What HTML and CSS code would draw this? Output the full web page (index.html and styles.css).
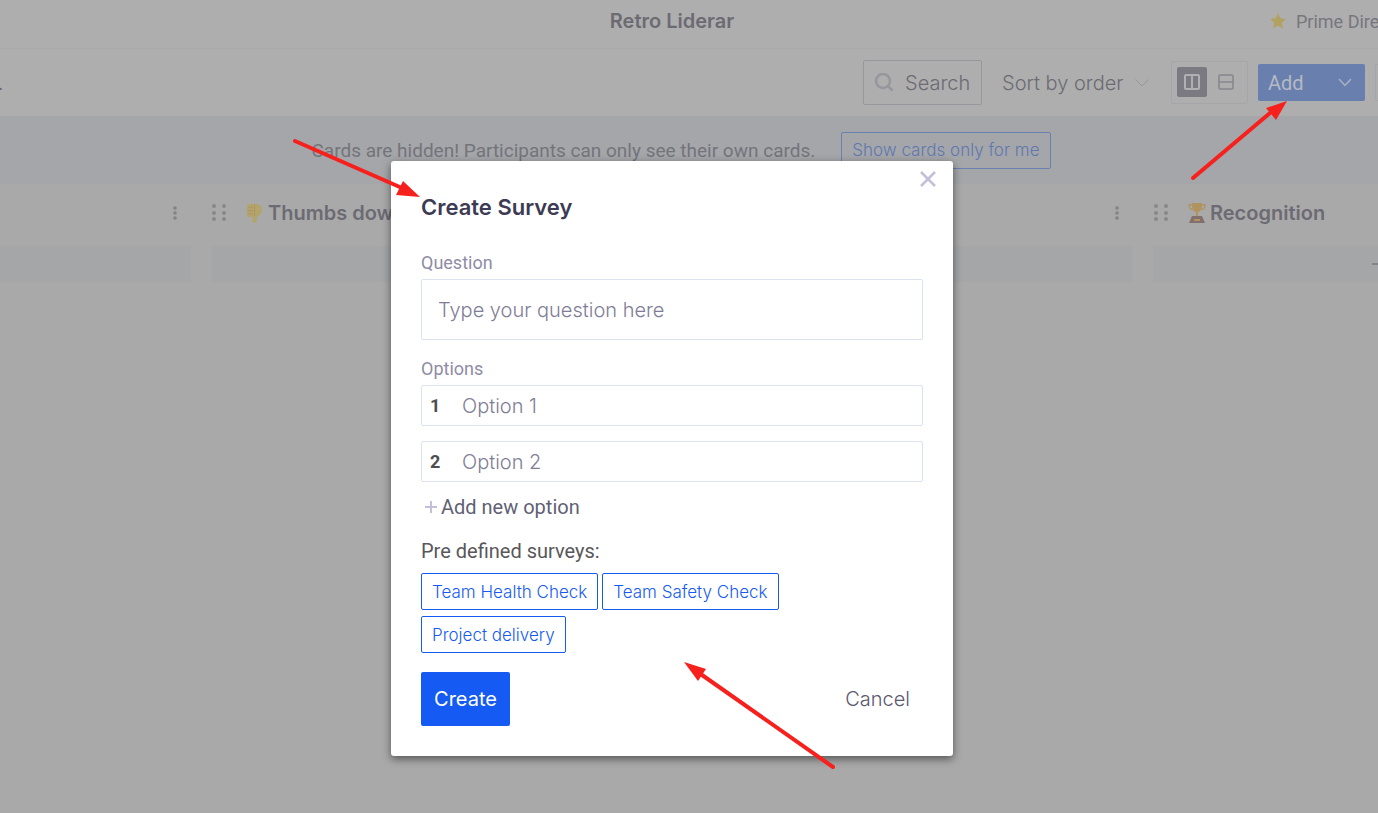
FILE: index.html
```
<!DOCTYPE html>
<html lang="en">
<head>
    <meta charset="UTF-8">
    <title>Retro Liderar</title>
    <link rel="stylesheet" href="styles.css">
</head>
<body>
<div id="page">
    <header class="topbar">
        <h1>Retro Liderar</h1>
        <a href="#" class="prime">
            <svg width="16" height="16" viewBox="0 0 16 16"><path d="M8 0l2.300 5.300 5.700.6-4.300 3.800L13 15.500 8 12.500 3 15.500l1.300-5.800L0 5.900l5.700-.6z" fill="#b3a15f"/></svg>
            <span>Prime Directive</span>
        </a>
    </header>
    <div class="toolbar">
        <span class="crumb">.</span>
        <button class="search">
            <svg width="20" height="20" viewBox="0 0 20 20" fill="none" stroke="#96969d" stroke-width="2.500"><circle cx="9" cy="8" r="7"/><path d="M14 13l4 4" stroke-linecap="round"/></svg>
            Search
        </button>
        <button class="sort">
            Sort by order
            <svg width="14" height="8" viewBox="0 0 14 8" fill="none" stroke="#96969b"><path d="M.5.5L7 7 13.500.5"/></svg>
        </button>
        <div class="views">
            <button class="on" aria-label="Columns">
                <svg width="16" height="16" viewBox="0 0 16 16" fill="none" stroke="#b0b0b2" stroke-width="2"><rect x="1" y="1" width="14" height="14" rx="1"/><path d="M8 1v14"/></svg>
            </button>
            <button aria-label="Rows">
                <svg width="16" height="16" viewBox="0 0 16 16" fill="none" stroke="#87868c" stroke-width="1.500"><rect x="1" y="1" width="14" height="14" rx="1"/><path d="M1 8h14"/></svg>
            </button>
        </div>
        <button class="add">
            Add
            <svg width="14" height="9" viewBox="0 0 14 9" fill="none" stroke="#a9b1c2" stroke-width="1.500"><path d="M1 1l6 6.500L13 1"/></svg>
        </button>
        <button class="more" aria-label="More"></button>
    </div>
    <div class="banner">
        <span>Cards are hidden! Participants can only see their own cards.</span>
        <button class="outline">Show cards only for me</button>
    </div>
    <main class="board">
        <section>
            <div class="head">
                <svg class="dots" width="6" height="14" viewBox="0 0 6 14" fill="#838387"><circle cx="3" cy="2" r="1.800"/><circle cx="3" cy="7" r="1.800"/><circle cx="3" cy="12" r="1.800"/></svg>
            </div>
            <button class="new" aria-label="Add card"></button>
        </section>
        <section>
            <div class="head">
                <svg class="grip" width="16" height="18" viewBox="0 0 16 18" fill="#88888b"><circle cx="3" cy="2" r="2"/><circle cx="13" cy="2" r="2"/><circle cx="3" cy="9" r="2"/><circle cx="13" cy="9" r="2"/><circle cx="3" cy="15" r="2"/><circle cx="13" cy="15" r="2"/></svg>
                <svg width="18" height="20" viewBox="0 0 18 20"><path d="M2 1h8c4 0 6 2.500 6 6 0 3-2 5.500-5 7v4c0 2.500-4.500 2.500-4.500 0v-4H3C1 14 1 12 1.500 11 .5 10 .5 8.500 1.300 7.500.5 6.500.5 5 1.500 4 .8 2.500 1 1 2 1z" fill="#b3a46c"/><path d="M2 4.500h5M1.500 7.500H7M2 11h5M8.500 1v12" stroke="#ad9663" fill="none"/></svg>
                <h2>Thumbs down</h2>
            </div>
            <button class="new" aria-label="Add card"></button>
        </section>
        <section>
            <div class="head">
                <svg class="dots" width="6" height="14" viewBox="0 0 6 14" fill="#838387"><circle cx="3" cy="2" r="1.800"/><circle cx="3" cy="7" r="1.800"/><circle cx="3" cy="12" r="1.800"/></svg>
            </div>
            <button class="new" aria-label="Add card"></button>
        </section>
        <section>
            <div class="head">
                <svg class="grip" width="16" height="18" viewBox="0 0 16 18" fill="#88888b"><circle cx="3" cy="2" r="2"/><circle cx="13" cy="2" r="2"/><circle cx="3" cy="9" r="2"/><circle cx="13" cy="9" r="2"/><circle cx="3" cy="15" r="2"/><circle cx="13" cy="15" r="2"/></svg>
                <svg width="18" height="20" viewBox="0 0 18 20"><path d="M4 0h10c0 5-1 8-4 9.500V14H8V9.500C5 8 4 5 4 0z" fill="#b0935f"/><path d="M4 2H1c0 3 1.500 4.500 4 4.500M14 2h3c0 3-1.500 4.500-4 4.500" stroke="#b0935f" stroke-width="1.300" fill="none"/><path d="M4 13h10l3 7H1z" fill="#83706c"/><path d="M6 16h6v2H6z" fill="#b0935f"/></svg>
                <h2>Recognition</h2>
            </div>
            <button class="new" aria-label="Add card"><svg width="14" height="14" viewBox="0 0 14 14" stroke="#838388" stroke-width="2"><path d="M0 7h14M7 0v14"/></svg></button>
        </section>
    </main>
</div>

<div id="mask">
    <form class="modal" role="dialog" aria-labelledby="title">
        <button type="button" class="close" aria-label="Close">
            <svg width="16" height="16" viewBox="0 0 16 16" fill="none" stroke="#c2c0d8" stroke-width="2.500"><path d="M1 1l14 14M15 1L1 15"/></svg>
        </button>
        <h2 id="title">Create Survey</h2>
        <label for="question">Question</label>
        <input type="text" id="question" placeholder="Type your question here">
        <label for="option1">Options</label>
        <div class="option">
            <b>1</b>
            <input type="text" id="option1" placeholder="Option 1">
        </div>
        <div class="option">
            <b>2</b>
            <input type="text" id="option2" aria-label="Option 2" placeholder="Option 2">
        </div>
        <button type="button" class="addOption">
            <svg width="14" height="14" viewBox="0 0 14 14" stroke="#c2c0d8" stroke-width="2"><path d="M1 7h12M7 1v12"/></svg>
            Add new option
        </button>
        <p>Pre defined surveys:</p>
        <div class="presets">
            <button type="button" class="outline">Team Health Check</button>
            <button type="button" class="outline">Team Safety Check</button>
            <button type="button" class="outline">Project delivery</button>
        </div>
        <div class="actions">
            <button type="submit" class="create">Create</button>
            <button type="button" class="cancel">Cancel</button>
        </div>
    </form>
</div>

<svg id="arrows" width="1378" height="813" viewBox="0 0 1378 813" fill="#f6201d" stroke="#f6201d">
    <path d="M295 141l107 47M1193 178l77-65M833 767L702 675" stroke-width="4" stroke-linecap="round"/>
    <path d="M420 197l-17-16-7 14zM1287 101l-21 7 10 12zM684 662l22 7-8 12z" stroke="none"/>
</svg>
</body>
</html>
```
FILE: styles.css
```
* {
    margin: 0;
    padding: 0;
    box-sizing: border-box;
}

body {
    min-height: 100vh;
    overflow: hidden;
    background-color: #a9a9a9;
    font-family: Roboto, "Liberation Sans", sans-serif;
    font-size: 20px;
    color: #58585a;
}
svg{
    flex: none;
}
button{
    border: none;
    background: none;
    font-family: Inter, "Liberation Sans", sans-serif;
    font-size: 20px;
    font-weight: 300;
    color: inherit;
    white-space: nowrap;
    cursor: pointer;
}
h1, h2{
    font-family: Inter, "Liberation Sans", sans-serif;
    font-size: 20px;
    font-weight: 600;
    color: #6c6b74;
    white-space: nowrap;
}

/* top */
.topbar{
    display: grid;
    grid-template-columns: 1fr auto 1fr;
    align-items: center;
    height: 49px;
    padding: 0 34px 6px 0;
    overflow: hidden;
    background-color: #aeaeae;
    border-bottom: 1px solid #a9a9aa;
}
.topbar h1{
    grid-column: 2;
}
.prime{
    display: flex;
    align-items: center;
    gap: 10px;
    justify-self: end;
    width: 108px;
    margin-right: -34px;
    font-size: 18px;
    color: #77767d;
    text-decoration: none;
    white-space: nowrap;
}
.toolbar{
    display: flex;
    align-items: center;
    height: 67px;
    overflow: hidden;
    background-color: #aeaeae;
    color: #6c6b72;
}
.crumb{
    flex: 1;
    margin-left: -2px;
}
.search{
    display: flex;
    align-items: center;
    gap: 11px;
    width: 119px;
    height: 45px;
    padding-left: 10px;
    border: 1px solid #96989d;
    border-radius: 2px;
}
.sort{
    display: flex;
    align-items: center;
    justify-content: space-between;
    width: 147px;
    margin: 0 22px 0 20px;
}
.views{
    display: flex;
    gap: 4px;
    width: 77px;
    height: 43px;
    padding: 5px;
    border: 1px solid #a6a6a8;
    border-radius: 2px;
}
.views button{
    display: flex;
    align-items: center;
    justify-content: center;
    width: 30px;
    height: 30px;
    border-radius: 2px;
}
.views .on{
    background-color: #7b7a82;
}
.add{
    display: flex;
    align-items: center;
    justify-content: space-between;
    width: 107px;
    height: 37px;
    margin: 0 10px;
    padding: 0 13px 0 10px;
    border-radius: 2px;
    background-color: #697fae;
    font-family: Roboto, "Liberation Sans", sans-serif;
    font-weight: 400;
    color: #b5b9c4;
}
.more{
    width: 40px;
    height: 37px;
    margin-right: -37px;
    border: 1px solid #a6a6a8;
    border-radius: 2px;
}
.banner{
    display: flex;
    align-items: center;
    justify-content: center;
    gap: 26px;
    height: 68px;
    padding-right: 16px;
    background-color: #a4a6aa;
    font-size: 19px;
    color: #74747a;
}
.outline{
    height: 37px;
    padding: 0 10px;
    border: 1px solid #155bf3;
    border-radius: 2px;
    font-size: 17px;
    color: #155bf3;
}
.banner .outline{
    border-color: #6a80b1;
    color: #6078b0;
}

/* board */
.board{
    display: flex;
    justify-content: center;
    gap: 20px;
    padding-right: 34px;
    overflow: hidden;
}
.board section{
    flex: none;
    width: 451px;
}
.head{
    display: flex;
    align-items: center;
    height: 62px;
    padding-bottom: 4px;
}
.grip{
    margin-right: 19px;
}
.dots{
    margin: 0 13px 0 auto;
}
.head h2{
    margin-left: 4px;
}
.new{
    display: flex;
    align-items: center;
    justify-content: center;
    width: 100%;
    height: 36px;
    background-color: #a4a6a8;
}

/* modal */
#mask{
    position: absolute;
    top: 0;
    left: 0;
    display: flex;
    justify-content: center;
    align-items: flex-start;
    width: 100%;
    padding: 161px 34px 0 0;
}
.modal{
    position: relative;
    width: 562px;
    padding: 30px;
    border-radius: 3px;
    background-color: #fff;
    box-shadow: 0 3px 8px rgba(0,0,0,0.5);
}
.close{
    position: absolute;
    top: 10px;
    right: 17px;
    display: flex;
}
.modal h2{
    margin-bottom: 41px;
    font-size: 22px;
    line-height: 32px;
    color: #3d3b54;
}
.modal label{
    display: block;
    margin: -12px 0 5px;
    font-size: 18px;
    line-height: 22px;
    color: #8f8ca5;
}
.modal input{
    width: 100%;
    border: 1px solid #dce3ef;
    border-radius: 2px;
    font-family: Inter, "Liberation Sans", sans-serif;
    font-size: 20px;
    font-weight: 300;
    color: #3d3b54;
}
.modal input::placeholder{
    color: #807d96;
}
#question{
    height: 61px;
    margin-bottom: 30px;
    padding: 0 16px;
}
.option{
    display: flex;
    align-items: center;
    height: 41px;
    margin-bottom: 15px;
    padding-left: 8px;
    border: 1px solid #dce3ef;
    border-radius: 2px;
}
.option b{
    width: 32px;
    font-size: 18px;
    color: #4e4e50;
}
.option input{
    flex: 1;
    border: none;
}
.addOption{
    display: flex;
    align-items: center;
    gap: 3px;
    height: 20px;
    padding-left: 3px;
    font-family: Roboto, "Liberation Sans", sans-serif;
    font-weight: 400;
    color: #615f74;
}
.modal p{
    margin: 22px 0 10px;
    line-height: 24px;
}
.presets{
    display: flex;
    flex-wrap: wrap;
    gap: 6px 4px;
    width: 400px;
}
.actions{
    display: flex;
    justify-content: space-between;
    margin-top: 19px;
}
.create{
    width: 89px;
    height: 54px;
    border-radius: 2px;
    background-color: #155bf3;
    font-weight: 400;
    color: #fff;
}
.cancel{
    padding: 0 13px;
    color: #5b596e;
}

#arrows{
    position: absolute;
    top: 0;
    left: 0;
    pointer-events: none;
}
```
